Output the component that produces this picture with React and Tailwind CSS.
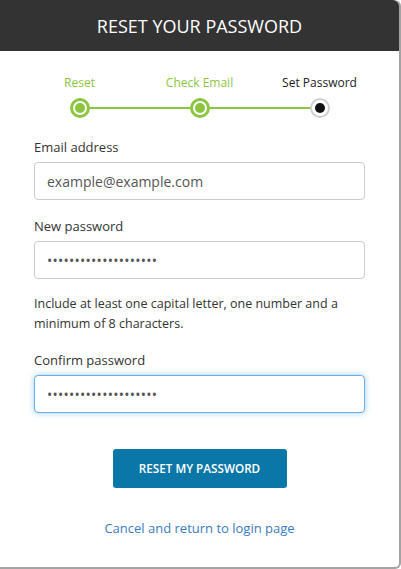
import React from "react";

const steps = [
  { label: "Reset", done: true },
  { label: "Check Email", done: true },
  { label: "Set Password", done: false },
];

const StepDot = ({ done }) =>
  done ? (
    <div className="w-5 h-5 rounded-full border-[3px] border-[#8cc63f] bg-white flex items-center justify-center">
      <div className="w-[10px] h-[10px] rounded-full bg-[#8cc63f]" />
    </div>
  ) : (
    <div className="w-5 h-5 rounded-full border-[2px] border-[#cfcfcf] bg-white flex items-center justify-center">
      <div className="w-[10px] h-[10px] rounded-full bg-[#111]" />
    </div>
  );

const Field = ({ label, type = "text", value, focused, className = "" }) => (
  <div className={className}>
    <label className="block text-[13px] leading-5 text-[#333] mb-[5px]">{label}</label>
    <input
      type={type}
      readOnly
      value={value}
      className={`block w-full h-[38px] px-3 rounded-[4px] bg-white text-[14px] text-[#555] outline-none border ${
        type === "password" ? "tracking-[0.25px]" : ""
      } ${
        focused
          ? "border-[#66afe9] shadow-[0_0_6px_rgba(102,175,233,0.6)]"
          : "border-[#cccccc]"
      }`}
    />
  </div>
);

export default function App() {
  return (
    <div
      className="w-[401px] h-[569px] bg-white overflow-hidden"
      style={{ fontFamily: '"Open Sans", "Liberation Sans", sans-serif' }}
    >
      <div className="w-[401px] h-[569px] rounded-tr-md rounded-br-md border-r-2 border-b-2 border-[#a3a3a3] flex flex-col">
        <div className="h-[51px] bg-[#333333] rounded-tr-md flex items-center justify-center pt-[2px]">
          <h1 className="text-white text-[18px] font-normal">RESET YOUR PASSWORD</h1>
        </div>

        <div className="pt-[22px] relative w-[360px] mx-auto">
          <div className="absolute left-[60px] right-[60px] top-[56px] h-[2px] bg-[#8cc63f]" />
          <div className="grid grid-cols-3 relative">
            {steps.map((s) => (
              <div key={s.label} className="flex flex-col items-center">
                <span
                  className={`text-[12px] leading-5 ${s.done ? "text-[#8cc63f]" : "text-[#222]"}`}
                >
                  {s.label}
                </span>
                <div className="mt-[5px]">
                  <StepDot done={s.done} />
                </div>
              </div>
            ))}
          </div>
        </div>

        <div className="px-[34px] pt-[19px]">
          <Field label="Email address" value="example@example.com" />
          <Field
            label="New password"
            type="password"
            value="12345678901234567890"
            className="mt-[16px]"
          />
          <p className="mt-[15px] text-[12.5px] leading-5 text-[#333]">
            Include at least one capital letter, one number and a minimum of 8 characters.
          </p>
          <Field
            label="Confirm password"
            type="password"
            value="12345678901234567890"
            focused
            className="mt-[16px]"
          />

          <div className="flex justify-center mt-[36px]">
            <button className="w-[174px] h-[39px] rounded-[3px] bg-[#0a77a8] text-white text-[11.7px] font-semibold">
              RESET MY PASSWORD
            </button>
          </div>

          <div className="text-center mt-[27px]">
            <a href="#" className="text-[13px] leading-5 text-[#3a7bbf]">
              Cancel and return to login page
            </a>
          </div>
        </div>
      </div>
    </div>
  );
}
